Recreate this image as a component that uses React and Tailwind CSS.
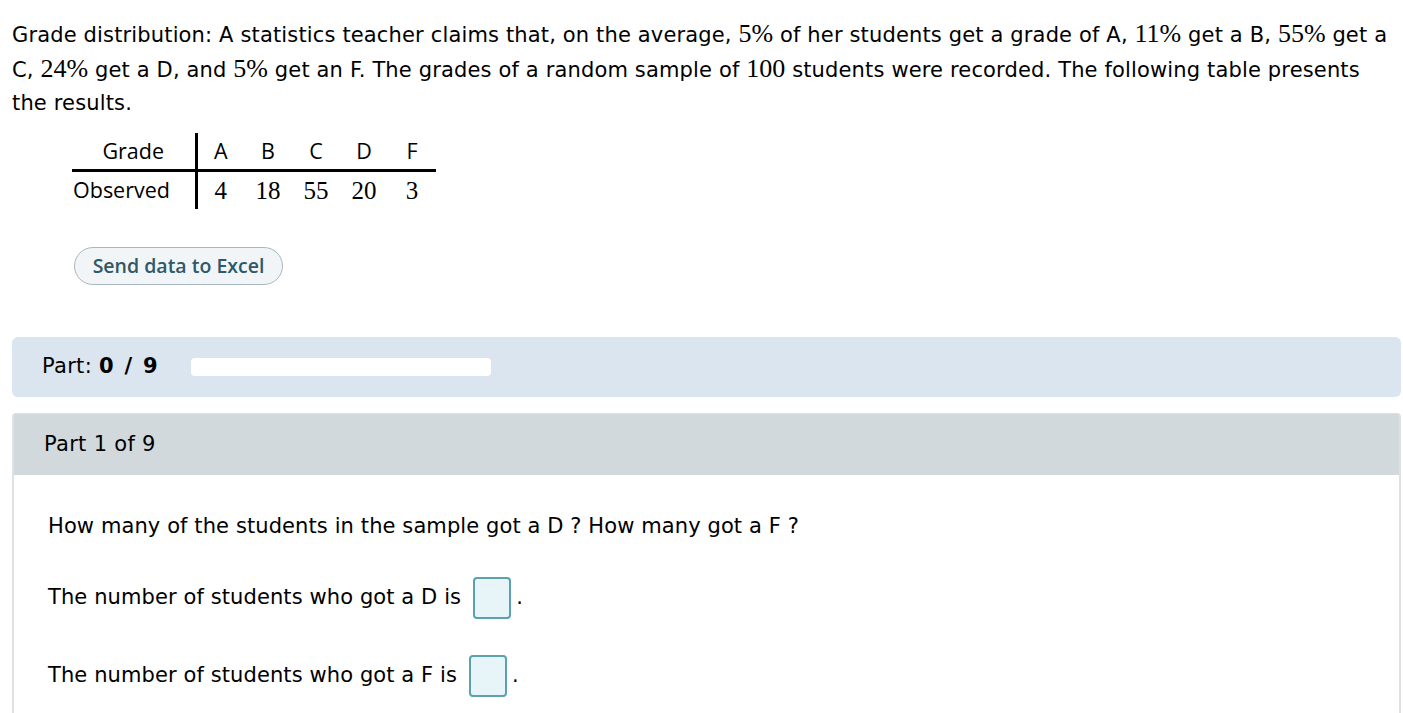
import React from 'react';

const serif = "font-['Liberation_Serif',serif]";

const M = ({ children }) => <span className={`${serif} text-[26px] tracking-normal`}>{children}</span>;

const AnswerBox = () => (
  <span className="inline-block align-middle w-[38px] h-[42px] ml-[12px] mr-[5px] rounded-[4px] border-2 border-[#5aa3ad] bg-[#e8f5f8]" />
);

export default function App() {
  const grades = ['A', 'B', 'C', 'D', 'F'];
  const observed = ['4', '18', '55', '20', '3'];

  return (
    <div className="min-h-[713px] bg-white text-black font-['DejaVu_Sans',Verdana,sans-serif]">
      {/* Question text */}
      <p className="px-[12px] pt-[17px] text-[21px] leading-[33px] tracking-[0.15px] whitespace-nowrap">
        Grade distribution: A statistics teacher claims that, on the average, <M>5%</M> of her students get a grade of A, <M>11%</M> get a B, <M>55%</M> get a
        <br />
        C, <M>24%</M> get a D, and <M>5%</M> get an F. The grades of a random sample of <M>100</M> students were recorded. The following table presents
        <br />
        the results.
      </p>

      {/* Table */}
      <div className="ml-[72px] mt-[13px] font-['Open_Sans',sans-serif] text-[21.5px]">
        <table className="border-collapse">
          <tbody>
            <tr className="border-b-[3px] border-black">
              <td className="w-[124px] h-[37px] text-center border-r-[3px] border-black">Grade</td>
              {grades.map((g) => (
                <td key={g} className="w-[48px] text-center">{g}</td>
              ))}
            </tr>
            <tr>
              <td className="h-[39px] text-left pl-[1px] border-r-[3px] border-black">Observed</td>
              {observed.map((o, i) => (
                <td key={i} className={`${serif} text-[25px] text-center`}>{o}</td>
              ))}
            </tr>
          </tbody>
        </table>
      </div>

      <button className="ml-[74px] mt-[38px] w-[209px] h-[38px] rounded-full border border-[#a9b8c0] bg-[#f1f5f8] text-[#2f5868] text-[19.5px] font-semibold font-['Open_Sans',sans-serif]">
        Send data to Excel
      </button>

      {/* Progress */}
      <div className="ml-[12px] mr-[2px] mt-[52px] h-[60px] rounded-[6px] bg-[#dae5ef] flex items-center px-[30px] text-[21px] tracking-[0.3px]">
        <span>
          Part: <b className="tracking-[1.8px]">0 / 9</b>
        </span>
        <div className="ml-[31px] w-[300px] h-[18px] rounded-[4px] bg-white" />
      </div>

      {/* Part 1 */}
      <div className="ml-[12px] mr-[2px] mt-[16px] border-x-2 border-t border-[#dde1e4] rounded-t-[4px]">
        <div className="h-[61px] bg-[#d2d9dd] flex items-center px-[30px] text-[21px] tracking-[0.3px]">Part 1 of 9</div>
        <div className="px-[34px] pt-[36px] pb-[40px] text-[21px] tracking-[0.1px]">
          <p>How many of the students in the sample got a D ? How many got a F ?</p>
          <p className="mt-[34px] flex items-center">
            The number of students who got a D is <AnswerBox />.
          </p>
          <p className="mt-[36px] flex items-center">
            The number of students who got a F is <AnswerBox />.
          </p>
        </div>
      </div>
    </div>
  );
}
